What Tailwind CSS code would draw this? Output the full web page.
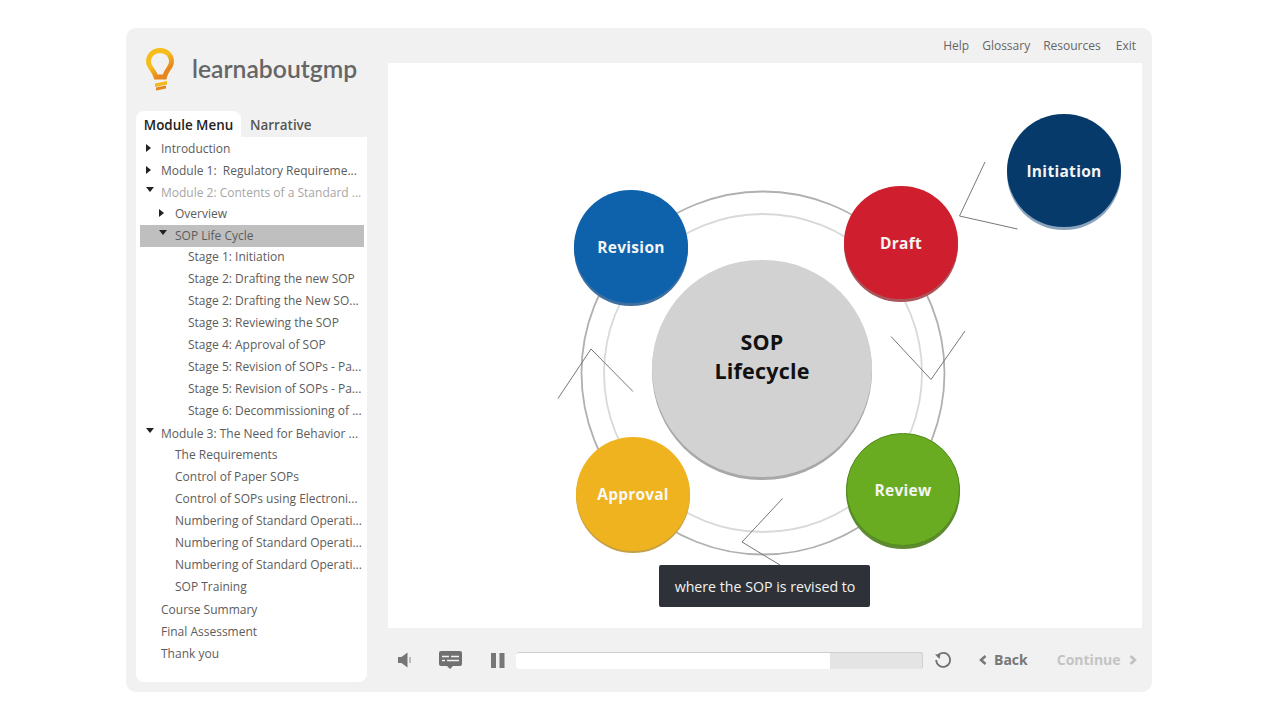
<!doctype html>
<html><head><meta charset="utf-8"><script src="https://cdn.jsdelivr.net/npm/@tailwindcss/browser@4"></script></head>
<body class="bg-white h-[720px] overflow-hidden font-['Open_Sans',sans-serif]">
<div class="ml-[126px] mt-[28px] w-[1026px] h-[664px] bg-[#f1f1f1] rounded-[10px] flex">
  <aside class="w-[262px] pl-[10px] flex flex-col">
    <div class="h-[83px] pl-[10px] pt-[20px] flex items-start">
      <svg width="28" height="43" viewBox="0 0 28 43"><defs><linearGradient id="b" x1="0.2" y1="0.1" x2="0.8" y2="1"><stop offset="0.35" stop-color="#f6bd1a"/><stop offset="0.8" stop-color="#e8851c"/></linearGradient></defs><path d="M14 2.500C7 2.500 2.500 7.500 2.500 13.500c0 6 5.500 8.500 7.500 15.500h8.500c1.500-7 7-9.500 7-15.500C25.500 7.500 21 2.500 14 2.500z" fill="none" stroke="url(#b)" stroke-width="4.800"/><path d="M9 35.500l12-2.500v3.500L9 39z" fill="#f4b81c"/><path d="M10 39.500l10-2v3l-10 2z" fill="#e8851c"/></svg>
      <span class="ml-[18px] mt-[5px] text-[24.700px] leading-[32px] font-['Lato',sans-serif] font-semibold text-[#666]">learnaboutgmp</span>
    </div>
    <div class="flex h-[26px] items-stretch">
      <div class="w-[105px] bg-white rounded-t-[8px] text-center text-[13.400px] leading-[28px] font-semibold text-[#222]">Module Menu</div>
      <div class="pl-[9px] text-[13.400px] leading-[28px] font-semibold text-[#555]">Narrative</div>
    </div>
    <nav class="w-[231px] h-[545px] pt-[1px] bg-white rounded-b-[8px] text-[12px] text-[#5c5c5c] whitespace-nowrap overflow-hidden">
      <div class="h-[22px] flex items-center relative"><svg class="absolute left-[10px] top-[6px]" width="5" height="8" viewBox="0 0 5 8"><path d="M0 0l5 4-5 4z" fill="#222"/></svg><span class="pl-[25px]">Introduction</span></div>
      <div class="h-[22px] flex items-center relative"><svg class="absolute left-[10px] top-[6px]" width="5" height="8" viewBox="0 0 5 8"><path d="M0 0l5 4-5 4z" fill="#222"/></svg><span class="pl-[25px] whitespace-pre">Module 1:  Regulatory Requireme...</span></div>
      <div class="h-[22px] flex items-center relative text-[#a6a6a6]"><svg class="absolute left-[10px] top-[5px]" width="8" height="5" viewBox="0 0 8 5"><path d="M0 0h8l-4 5z" fill="#222"/></svg><span class="pl-[25px]">Module 2: Contents of a Standard ...</span></div>
      <div class="h-[21px] flex items-center relative pb-[2px]"><svg class="absolute left-[23px] top-[5px]" width="5" height="8" viewBox="0 0 5 8"><path d="M0 0l5 4-5 4z" fill="#222"/></svg><span class="pl-[39px]">Overview</span></div>
      <div class="h-[22px] flex items-center relative bg-[#bfbfbf] ml-[4px] mr-[3px]"><svg class="absolute left-[19px] top-[5px]" width="8" height="5" viewBox="0 0 8 5"><path d="M0 0h8l-4 5z" fill="#222"/></svg><span class="pl-[35px]">SOP Life Cycle</span></div>
      <div class="h-[21px] flex items-center pl-[52px] pb-[2px]">Stage 1: Initiation</div>
      <div class="h-[22px] flex items-center pl-[52px]">Stage 2: Drafting the new SOP</div>
      <div class="h-[22px] flex items-center pl-[52px]">Stage 2: Drafting the New SO...</div>
      <div class="h-[22px] flex items-center pl-[52px]">Stage 3: Reviewing the SOP</div>
      <div class="h-[22px] flex items-center pl-[52px]">Stage 4: Approval of SOP</div>
      <div class="h-[22px] flex items-center pl-[52px]">Stage 5: Revision of SOPs - Pa...</div>
      <div class="h-[22px] flex items-center pl-[52px]">Stage 5: Revision of SOPs - Pa...</div>
      <div class="h-[22px] flex items-center pl-[52px]">Stage 6: Decommissioning of ...</div>
      <div class="h-[23px] flex items-center relative"><svg class="absolute left-[10px] top-[6px]" width="8" height="5" viewBox="0 0 8 5"><path d="M0 0h8l-4 5z" fill="#222"/></svg><span class="pl-[25px]">Module 3: The Need for Behavior ...</span></div>
      <div class="h-[21px] flex items-center pl-[39px] pb-[2px]">The Requirements</div>
      <div class="h-[22px] flex items-center pl-[39px]">Control of Paper SOPs</div>
      <div class="h-[22px] flex items-center pl-[39px]">Control of SOPs using Electroni...</div>
      <div class="h-[22px] flex items-center pl-[39px]">Numbering of Standard Operati...</div>
      <div class="h-[22px] flex items-center pl-[39px]">Numbering of Standard Operati...</div>
      <div class="h-[22px] flex items-center pl-[39px]">Numbering of Standard Operati...</div>
      <div class="h-[22px] flex items-center pl-[39px]">SOP Training</div>
      <div class="h-[23px] flex items-center pl-[25px]">Course Summary</div>
      <div class="h-[22px] flex items-center pl-[25px]">Final Assessment</div>
      <div class="h-[22px] flex items-center pl-[25px]">Thank you</div>
    </nav>
  </aside>
  <main class="w-[754px] flex flex-col">
    <div class="h-[35px] flex items-center justify-end pr-[6px] text-[12px] text-[#666]">
      <span>Help</span><span class="ml-[13px]">Glossary</span><span class="ml-[13px]">Resources</span><span class="ml-[15px]">Exit</span>
    </div>
    <div class="relative h-[565px] bg-white">
      <svg class="absolute inset-0" width="754" height="565" viewBox="388 63 754 565">
        <circle cx="763" cy="373" r="181.500" fill="none" stroke="#b0b0b0" stroke-width="1.800"/>
        <circle cx="763" cy="373" r="159" fill="none" stroke="#d9d9d9" stroke-width="1.800"/>
      </svg>
      <div class="absolute left-[264px] top-[197px] w-[220px] h-[217px] rounded-full bg-[#d2d2d2] shadow-[0_3px_0_#a8a8a8] flex items-center justify-center pb-[26px] text-center text-[21.500px] leading-[29px] font-bold tracking-[0.2px] text-[#111]">SOP<br>Lifecycle</div>
      <div class="absolute left-[186px] top-[127px] w-[114px] h-[113px] rounded-full bg-[#0d62ab] shadow-[0_3px_0_#3f6f9f] flex items-center justify-center pt-[2px] text-[15.500px] font-bold tracking-[0.3px] text-[#f4f4f4]">Revision</div>
      <div class="absolute left-[456px] top-[123px] w-[114px] h-[113px] rounded-full bg-[#cf1f2e] shadow-[0_3px_0_#a9555a] flex items-center justify-center pt-[2px] text-[15.500px] font-bold tracking-[0.3px] text-[#f4f4f4]">Draft</div>
      <div class="absolute left-[619px] top-[51px] w-[114px] h-[113px] rounded-full bg-[#053a6b] shadow-[0_3px_0_#8aa3bb] flex items-center justify-center pt-[2px] text-[15.500px] font-bold tracking-[0.3px] text-[#f4f4f4]">Initiation</div>
      <div class="absolute left-[188px] top-[374px] w-[114px] h-[114px] rounded-full bg-[#eeb31e] shadow-[0_2px_0_#c4a048] flex items-center justify-center pt-[1px] text-[15.500px] font-bold tracking-[0.2px] text-[#f8f8f8]">Approval</div>
      <div class="absolute left-[458px] top-[370px] w-[114px] h-[113px] rounded-full bg-[#69ac21] border border-[#4f8a1d] shadow-[0_3px_0_#5d8a33] flex items-center justify-center pt-[2px] text-[15.500px] font-bold tracking-[0.3px] text-[#f4f4f4]">Review</div>
      <svg class="absolute inset-0" width="754" height="565" viewBox="388 63 754 565" fill="none" stroke="#777" stroke-width="1">
        <path d="M985 162L959.500 216 1017.500 229"/>
        <path d="M558 398.500L591 349 633 391.500"/>
        <path d="M891 336.500L931 379.500 965 331"/>
        <path d="M782.500 498.500L742 542 780 565"/>
      </svg>
      <div class="absolute left-[271px] top-[502px] w-[211px] h-[42px] bg-[#2e3238] rounded-[2px] flex items-center justify-center pt-[2px] pl-[1px] text-[14.200px] text-[#f2f2f2]">where the SOP is revised to</div>
    </div>
    <div class="flex-1 flex items-center text-[#6f6f6f]">
      <svg class="ml-[9px]" width="16" height="16" viewBox="0 0 16 16"><path d="M1 5h3.500l6-4.500v15l-6-4.500H1z" fill="#757575"/><rect x="12" y="5" width="2" height="6" fill="#bbb"/></svg>
      <svg class="ml-[25px]" width="24" height="20" viewBox="0 0 24 20"><path d="M3 1h19a2 2 0 012 2v11a2 2 0 01-2 2h-7l-3 3-3-3H3a2 2 0 01-2-2V3a2 2 0 012-2z" fill="#707070"/><path d="M4 6.500h7M13 6.500h8M4 10.500h3M9 10.500h12" stroke="#f1f1f1" stroke-width="1.300"/></svg>
      <svg class="ml-[29px]" width="14" height="15" viewBox="0 0 14 15"><path d="M0 0h5v15H0zM8.500 0h5v15h-5z" fill="#777"/></svg>
      <div class="ml-[11px] mt-[1px] w-[407px] h-[17px] bg-[#e4e4e4] rounded-[3px] border-t border-r border-[#cfcfcf] overflow-hidden"><div class="w-[314px] h-full bg-white"></div></div>
      <svg class="ml-[11px]" width="18" height="18" viewBox="0 0 18 18" fill="none"><path d="M4 4.200A7 7 0 1 1 2.200 9" stroke="#717171" stroke-width="1.800"/><path d="M1 3.500l5.500-.5-1 5z" fill="#717171"/></svg>
      <svg class="ml-[27px]" width="8" height="10" viewBox="0 0 8 10" fill="none"><path d="M6.500 1L2 5l4.500 4" stroke="#777" stroke-width="2.500"/></svg>
      <span class="ml-[7px] text-[14px] font-bold text-[#777] mb-[1px]">Back</span>
      <span class="ml-[29px] text-[14px] font-bold text-[#c4c4c4] mb-[1px]">Continue</span>
      <svg class="ml-[8px]" width="8" height="10" viewBox="0 0 8 10" fill="none"><path d="M1.500 1L6 5 1.500 9" stroke="#c0c0c0" stroke-width="2.500"/></svg>
    </div>
  </main>
</div>
</body></html>
